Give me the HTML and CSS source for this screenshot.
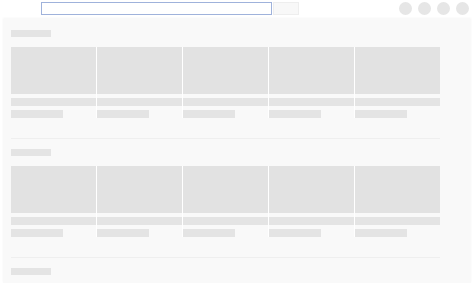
FILE: index.html
```html
<!DOCTYPE html>
<html lang="en">
<head>
  <meta charset="UTF-8">
  <title>Loading</title>
  <link rel="stylesheet" href="styles.css">
</head>
<body>
  <div class="topbar">
    <div class="search"></div>
    <div class="search-btn"></div>
    <div class="icons">
      <span class="dot"></span>
      <span class="dot"></span>
      <span class="dot"></span>
      <span class="dot"></span>
    </div>
  </div>

  <div class="panel">
    <div class="section">
      <div class="heading"></div>
      <div class="row">
        <div class="card"><div class="thumb"></div><div class="line"></div><div class="line short"></div></div>
        <div class="card"><div class="thumb"></div><div class="line"></div><div class="line short"></div></div>
        <div class="card"><div class="thumb"></div><div class="line"></div><div class="line short"></div></div>
        <div class="card"><div class="thumb"></div><div class="line"></div><div class="line short"></div></div>
        <div class="card"><div class="thumb"></div><div class="line"></div><div class="line short"></div></div>
      </div>
    </div>
    <div class="section">
      <div class="heading"></div>
      <div class="row">
        <div class="card"><div class="thumb"></div><div class="line"></div><div class="line short"></div></div>
        <div class="card"><div class="thumb"></div><div class="line"></div><div class="line short"></div></div>
        <div class="card"><div class="thumb"></div><div class="line"></div><div class="line short"></div></div>
        <div class="card"><div class="thumb"></div><div class="line"></div><div class="line short"></div></div>
        <div class="card"><div class="thumb"></div><div class="line"></div><div class="line short"></div></div>
      </div>
    </div>
    <div class="section last">
      <div class="heading"></div>
    </div>
  </div>
</body>
</html>
```

FILE: styles.css
```css
html, body {
  height: 100%;
}
body {
  margin: 0;
  background: #fff;
  font-family: "Liberation Sans", Arial, sans-serif;
  overflow: hidden;
}
.topbar {
  height: 19px;
  display: flex;
  align-items: flex-start;
  padding-top: 2px;
  padding-left: 41px;
  box-sizing: border-box;
}
.search {
  width: 231px;
  height: 13px;
  box-sizing: border-box;
  border: 1px solid #9fb2db;
  background: #fff;
}
.search-btn {
  width: 26px;
  height: 13px;
  margin-left: 1px;
  box-sizing: border-box;
  border: 1px solid #eeeeee;
  background: #f8f8f8;
}
.icons {
  display: flex;
  gap: 6px;
  margin-left: auto;
  margin-right: 5px;
}
.dot {
  width: 13px;
  height: 13px;
  border-radius: 50%;
  background: #e6e6e6;
}
.panel {
  margin: 0 3px;
  padding: 1px 8px 0;
  background: #f9f9f9;
  box-shadow: 0 -1px 2px rgba(0, 0, 0, 0.04);
  height: calc(100% - 19px);
  box-sizing: border-box;
  overflow: hidden;
}
.section {
  width: 429px;
  padding: 10px 0 20px;
  border-bottom: 1px solid #efefef;
}
.section.last {
  border-bottom: 0;
  padding-bottom: 0;
}
.heading {
  width: 40px;
  height: 7px;
  background: #e4e4e4;
}
.row {
  display: flex;
  margin-top: 10px;
}
.card {
  width: 86px;
  box-sizing: border-box;
  border-right: 1px solid #fff;
}
.card:last-child {
  width: 85px;
  border-right: 0;
}
.thumb {
  height: 47px;
  background: #e2e2e2;
}
.line {
  height: 8px;
  margin-top: 4px;
  background: #e4e4e4;
}
.line.short {
  width: 52px;
}
```
